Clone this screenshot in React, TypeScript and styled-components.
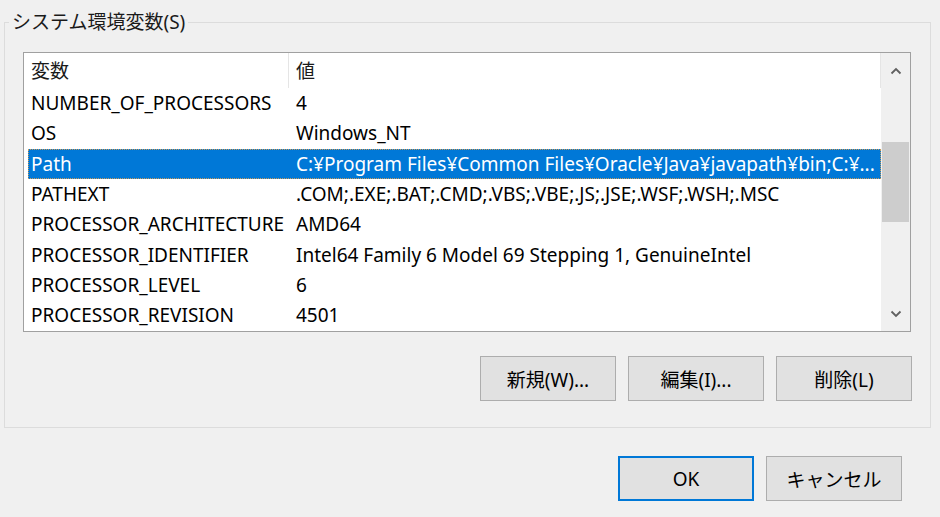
import styled, { createGlobalStyle } from "styled-components";

const GlobalStyle = createGlobalStyle`
  html, body {
    margin: 0;
    padding: 0;
    background: #f0f0f0;
  }
  body {
    font-family: "Noto Sans", "Noto Sans CJK JP", sans-serif;
    color: #000;
  }
`;

type EnvVar = { name: string; value: string };

const vars: EnvVar[] = [
  { name: "NUMBER_OF_PROCESSORS", value: "4" },
  { name: "OS", value: "Windows_NT" },
  { name: "Path", value: "C:¥Program Files¥Common Files¥Oracle¥Java¥javapath¥bin;C:¥..." },
  { name: "PATHEXT", value: ".COM;.EXE;.BAT;.CMD;.VBS;.VBE;.JS;.JSE;.WSF;.WSH;.MSC" },
  { name: "PROCESSOR_ARCHITECTURE", value: "AMD64" },
  { name: "PROCESSOR_IDENTIFIER", value: "Intel64 Family 6 Model 69 Stepping 1, GenuineIntel" },
  { name: "PROCESSOR_LEVEL", value: "6" },
  { name: "PROCESSOR_REVISION", value: "4501" },
];

const SELECTED = 2;

const App = () => {
  return (
    <Dialog>
      <GlobalStyle />
      <Group>
        <Legend>システム環境変数(S)</Legend>
        <ListView>
          <ListBody>
            <Header>
              <HeadCell>変数</HeadCell>
              <HeadCell $last>値</HeadCell>
            </Header>
            {vars.map((v, i) => (
              <Row key={v.name} $selected={i === SELECTED}>
                <NameCell>{v.name}</NameCell>
                <ValueCell>{v.value}</ValueCell>
              </Row>
            ))}
          </ListBody>
          <ScrollBar>
            <ArrowButton>
              <svg width="12" height="8" viewBox="0 0 12 8">
                <path d="M1.5 6.5 L6 2 L10.5 6.5" fill="none" stroke="#606060" strokeWidth="1.8" />
              </svg>
            </ArrowButton>
            <Track>
              <Thumb />
            </Track>
            <ArrowButton>
              <svg width="12" height="8" viewBox="0 0 12 8">
                <path d="M1.5 1.5 L6 6 L10.5 1.5" fill="none" stroke="#606060" strokeWidth="1.8" />
              </svg>
            </ArrowButton>
          </ScrollBar>
        </ListView>
        <ButtonRow>
          <Button>新規(W)...</Button>
          <Button>編集(I)...</Button>
          <Button>削除(L)</Button>
        </ButtonRow>
      </Group>
      <Footer>
        <Button $default>OK</Button>
        <Button>キャンセル</Button>
      </Footer>
    </Dialog>
  );
};

export default App;

const Dialog = styled.div`
  width: 940px;
  height: 517px;
  box-sizing: border-box;
  padding: 10px 0 0 4px;
  display: flex;
  flex-direction: column;
  overflow: hidden;
`;

const Group = styled.fieldset`
  box-sizing: border-box;
  width: 927px;
  margin: 0;
  padding: 18px 18px 26px 18px;
  border: 1px solid #dcdcdc;
  display: flex;
  flex-direction: column;
`;

const Legend = styled.legend`
  font-size: 19px;
  line-height: 24px;
  padding: 0 3px;
  margin-left: -14px;
  color: #1a1a1a;
`;

const ListView = styled.div`
  box-sizing: border-box;
  width: 888px;
  height: 280px;
  border: 1px solid #a0a0a0;
  background: #fff;
  display: flex;
`;

const ListBody = styled.div`
  width: 857px;
  display: flex;
  flex-direction: column;
  padding-left: 4px;
  box-sizing: border-box;
  font-size: 19px;
`;

const Header = styled.div`
  display: grid;
  grid-template-columns: 261px 1fr;
  height: 35px;
`;

const HeadCell = styled.div<{ $last?: boolean }>`
  padding: 6px 0 0 ${(p) => (p.$last ? "7px" : "3px")};
  line-height: 24px;
  border-right: 1px solid #e5e5e5;
  color: #1a1a1a;
`;

const Row = styled.div<{ $selected?: boolean }>`
  display: grid;
  grid-template-columns: 261px 1fr;
  height: 30.3px;
  align-items: center;
  box-sizing: border-box;
  background: ${(p) => (p.$selected ? "#0078d7" : "transparent")};
  color: ${(p) => (p.$selected ? "#fff" : "#000")};
  border: 1px dotted ${(p) => (p.$selected ? "#c89a5a" : "transparent")};
`;

const NameCell = styled.div`
  padding-left: 2px;
  white-space: nowrap;
  overflow: hidden;
`;

const ValueCell = styled.div`
  padding-left: 6px;
  white-space: nowrap;
  overflow: hidden;
`;

const ScrollBar = styled.div`
  width: 29px;
  background: #f0f0f0;
  display: flex;
  flex-direction: column;
`;

const ArrowButton = styled.div`
  height: 35px;
  display: flex;
  align-items: center;
  justify-content: center;
`;

const Track = styled.div`
  flex: 1;
  padding-top: 54px;
`;

const Thumb = styled.div`
  height: 80px;
  margin: 0 1px;
  background: #cdcdcd;
`;

const ButtonRow = styled.div`
  display: flex;
  justify-content: flex-end;
  gap: 12px;
  margin-top: 24px;
`;

const Button = styled.button<{ $default?: boolean }>`
  box-sizing: border-box;
  width: 136px;
  height: 45px;
  background: #e1e1e1;
  border: ${(p) => (p.$default ? "2px solid #0078d7" : "1px solid #adadad")};
  font-family: "Noto Sans", "Noto Sans CJK JP", sans-serif;
  font-size: 19px;
  color: #000;
  padding: 0;
`;

const Footer = styled.div`
  display: flex;
  justify-content: flex-end;
  gap: 12px;
  margin-top: 28px;
  padding-right: 38px;
`;
